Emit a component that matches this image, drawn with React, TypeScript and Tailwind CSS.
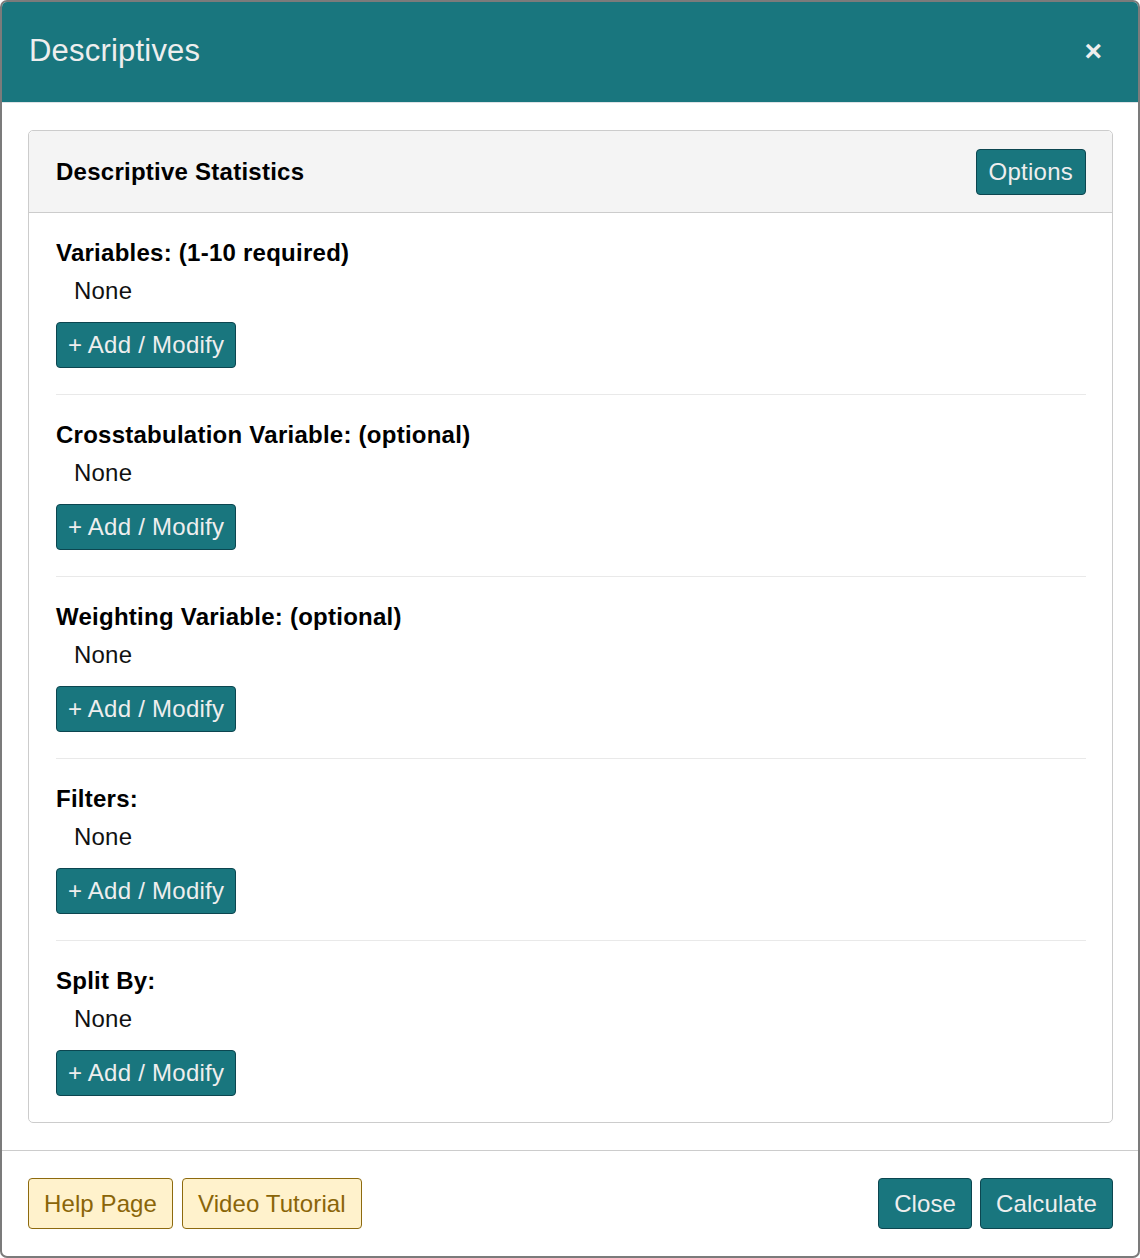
import React from "react";

const sections = [
  "Variables: (1-10 required)",
  "Crosstabulation Variable: (optional)",
  "Weighting Variable: (optional)",
  "Filters:",
  "Split By:",
];

const tealBtn =
  "bg-[#19767e] text-[#eeeeee] border border-[#0c4650] rounded-[4px] text-[24px] leading-none";

const yellowBtn =
  "h-[51px] px-[15px] bg-[#fff2cc] border border-[#8d6a0e] rounded-[4px] text-[24px] tracking-[0.1px] text-[#8a6508]";

const App = () => {
  return (
    <div className="w-[1140px] h-[1258px] bg-white font-['Liberation_Sans',Arial,sans-serif] text-[#111]">
      <div className="w-full h-full border-2 border-[#7b7b7b] rounded-[7px] overflow-hidden flex flex-col">
        {/* Header */}
        <div className="h-[101px] shrink-0 bg-[#19767e] border-b border-[#dee2e6] flex items-center justify-between pl-[27px] pr-[36px] pb-[2px]">
          <span className="text-[31px] tracking-[0.2px] text-[#eeeeee]">Descriptives</span>
          <span className="text-[30px] font-bold text-[#eeeeee] leading-none">×</span>
        </div>

        {/* Body */}
        <div className="pl-[26px] pr-[25px] pt-[27px] pb-[27px]">
          <div className="border border-[#cccccc] rounded-[5px]">
            <div className="h-[82px] bg-[#f4f4f4] border-b border-[#cccccc] rounded-t-[5px] flex items-center justify-between pl-[27px] pr-[26px]">
              <span className="text-[24px] font-bold tracking-[0.25px] text-black">Descriptive Statistics</span>
              <button className={`${tealBtn} tracking-[0.25px] h-[46px] px-[12px]`}>Options</button>
            </div>
            <div className="pl-[27px] pr-[26px]">
              {sections.map((label, i) => (
                <div
                  key={label}
                  className={`pt-[22px] pb-[26px] ${i < sections.length - 1 ? "border-b border-[#e9e9e9]" : ""}`}
                >
                  <div className="text-[24px] font-bold tracking-[0.25px] leading-[36px] text-black">{label}</div>
                  <div className="text-[24px] tracking-[0.2px] leading-[36px] mt-[2px] pl-[18px]">None</div>
                  <button className={`${tealBtn} tracking-[0.25px] h-[46px] px-[11px] mt-[13px]`}>+ Add / Modify</button>
                </div>
              ))}
            </div>
          </div>
        </div>

        {/* Footer */}
        <div className="border-t border-[#cccccc] pl-[26px] pr-[25px] pt-[27px] flex items-start justify-between">
          <div className="flex gap-[9px]">
            <button className={yellowBtn}>Help Page</button>
            <button className={yellowBtn}>Video Tutorial</button>
          </div>
          <div className="flex gap-[8px]">
            <button className={`${tealBtn} tracking-[0.1px] h-[51px] px-[15px]`}>Close</button>
            <button className={`${tealBtn} tracking-[0.1px] h-[51px] px-[15px]`}>Calculate</button>
          </div>
        </div>
      </div>
    </div>
  );
};

export default App;
